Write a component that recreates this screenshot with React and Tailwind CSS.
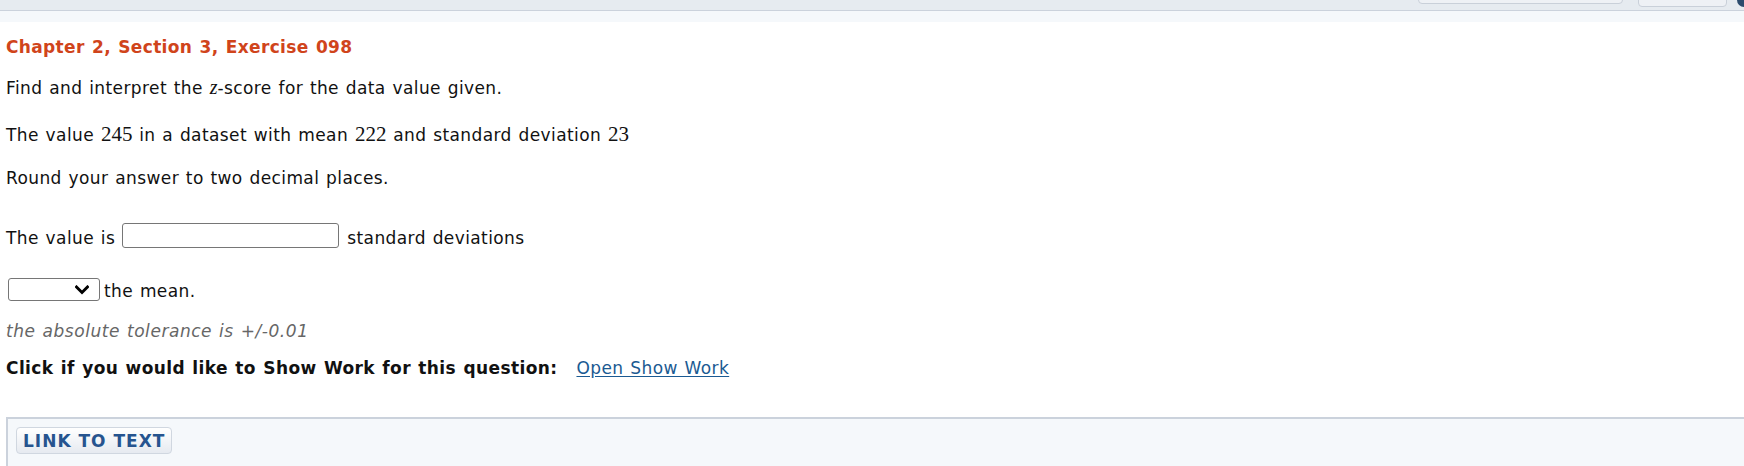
import React from "react";

function Num({ children }) {
  return (
    <span className="font-['Liberation_Serif','Times_New_Roman',serif] text-[21px] tracking-normal">{children}</span>
  );
}

export default function App() {
  return (
    <div className="w-[1744px] h-[466px] overflow-hidden bg-white font-['DejaVu_Sans','Verdana',sans-serif] text-[#111]">
      {/* top bar */}
      <div className="h-[11px] bg-[#e6ebf0] border-b border-[#cbd2dc] flex justify-end items-start overflow-hidden">
        <div className="w-[205px] h-[14px] -mt-[10px] mr-[15px] rounded-[4px] border border-[#c9d0d9] bg-[#eef1f5]" />
        <div className="w-[89px] h-[17px] -mt-[10px] mr-[10px] rounded-[4px] border border-[#c9d0d9] bg-[#eef1f5]" />
        <div className="w-[14px] h-[14px] -mt-[7px] -mr-[7px] rounded-full bg-[#2c4b6d]" />
      </div>
      <div className="h-[11px] bg-[#f5f8fb]" />

      <div className="px-[6px] text-[17px] leading-[20px] tracking-[0.4px] [word-spacing:1px]">
        <h2 className="mt-[15px] text-[17px] leading-[20px] font-bold text-[#d0441b] tracking-[0.35px]">
          Chapter 2, Section 3, Exercise 098
        </h2>
        <p className="mt-[20px]">
          Find and interpret the{" "}
          <span className="font-['Liberation_Serif','Times_New_Roman',serif] italic text-[20px] tracking-normal">z</span>-score for the data value given.
        </p>
        <p className="mt-[26px]">
          The value <Num>245</Num> in a dataset with mean <Num>222</Num> and standard deviation <Num>23</Num>
        </p>
        <p className="mt-[23px]">Round your answer to two decimal places.</p>

        <div className="mt-[35px] flex items-end">
          <span>The value is</span>
          <div className="ml-[7px] w-[217px] h-[25px] border border-[#767676] rounded-[3px] bg-white" />
          <span className="ml-[8px]">standard deviations</span>
        </div>

        <div className="mt-[30px] flex items-end">
          <div className="ml-[2px] w-[92px] h-[23px] border border-[#767676] rounded-[3px] bg-white flex items-center justify-end pr-[10px]">
            <svg width="14" height="10" viewBox="0 0 14 10">
              <path d="M1.5 2 L7 7.5 L12.5 2" fill="none" stroke="#000" strokeWidth="3" strokeLinecap="square" />
            </svg>
          </div>
          <span className="ml-[4px]">the mean.</span>
        </div>

        <p className="mt-[20px] italic text-[#666] tracking-[0.55px]">the absolute tolerance is +/-0.01</p>

        <p className="mt-[17px]">
          <span className="font-bold">Click if you would like to Show Work for this question:</span>
          <a className="ml-[19px] text-[#1b5a92] underline underline-offset-[2px]" href="#">Open Show Work</a>
        </p>
      </div>

      <div className="mt-[39px] ml-[6px] h-[60px] border-t-2 border-l-2 border-[#cbd2dc] bg-[#f5f8fb] pt-[8px] pl-[8px]">
        <button className="h-[27px] px-[6px] rounded-[4px] border border-[#d0d7e0] bg-gradient-to-b from-[#ffffff] to-[#e6eaf0] text-[#26548f] font-bold text-[17px] leading-[20px] tracking-[1px]">
          LINK TO TEXT
        </button>
      </div>
    </div>
  );
}
